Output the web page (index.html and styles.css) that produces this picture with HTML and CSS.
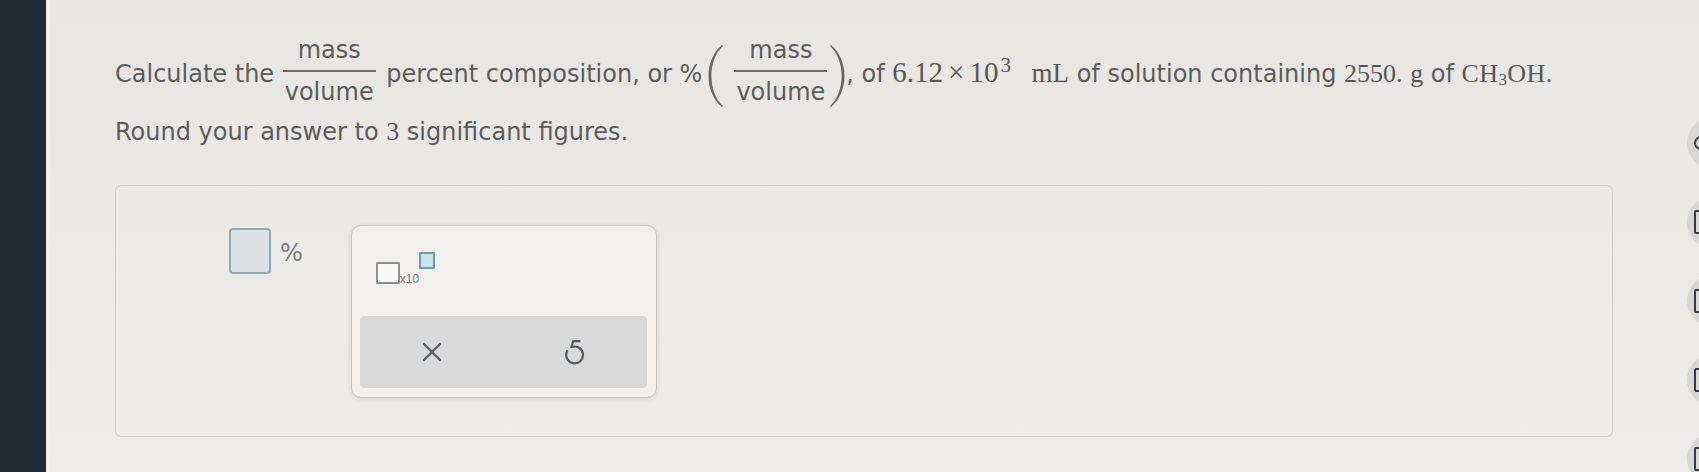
FILE: index.html
```html
<!DOCTYPE html>
<html lang="en">
<head>
<meta charset="utf-8">
<title>Mass/volume percent</title>
<link rel="stylesheet" href="styles.css">
</head>
<body>
<div class="screen">
  <div class="sidebar"></div>
  <div class="edge"></div>
  <main class="content">
    <p class="q1">Calculate the <span class="frac frac-a"><span class="num">mass</span><span class="bar"></span><span class="den">volume</span></span> percent composition, or %<svg class="paren paren-l" width="16" height="64" viewBox="0 0 16 64"><path d="M15,1 C-3,16 -3,48 15,63 L16,62 C0.5,48 0.5,16 16,2 Z"/></svg><span class="frac frac-b"><span class="num">mass</span><span class="bar"></span><span class="den">volume</span></span><svg class="paren" width="16" height="64" viewBox="0 0 16 64"><path transform="translate(16,0) scale(-1,1)" d="M15,1 C-3,16 -3,48 15,63 L16,62 C0.5,48 0.5,16 16,2 Z"/></svg>, of <span class="m big">6.12</span><span class="m big times">×</span><span class="m big">10</span><span class="m sup">3</span> <span class="m unit">mL</span> of solution containing <span class="m">2550.</span> <span class="m">g</span> of <span class="m chem">CH<span class="sub">3</span>OH.</span></p>
    <p class="q2">Round your answer to <span class="m">3</span> significant figures.</p>
    <section class="answer">
      <div class="input"></div>
      <span class="pct">%</span>
      <div class="popup">
        <div class="sci">
          <span class="base"></span>
          <span class="x10">x10</span>
          <span class="exp"></span>
        </div>
        <div class="actions">
          <button class="act" type="button" aria-label="Clear">
            <svg width="20" height="20" viewBox="0 0 20 20"><path d="M2 2 L18 18 M18 2 L2 18"/></svg>
          </button>
          <button class="act" type="button" aria-label="Undo">
            <svg width="22" height="27" viewBox="0 0 22 27"><path d="M15.5 3.2 L9.2 3.2 L7.4 9.2 M7.4 9.2 A8.4 8.4 0 1 1 3.2 13"/></svg>
          </button>
        </div>
      </div>
    </section>
  </main>
  <aside class="rail">
    <div class="circle"><span class="ico ico-round"></span></div>
    <div class="circle"><span class="ico ico-rect"></span></div>
    <div class="circle"><span class="ico ico-rect"></span></div>
    <div class="circle"><span class="ico ico-rect"></span></div>
    <div class="circle"><span class="ico ico-rect"></span></div>
  </aside>
</div>
</body>
</html>
```
FILE: styles.css
```css
html, body {
  margin: 0;
  padding: 0;
}

body {
  width: 1699px;
  height: 472px;
  overflow: hidden;
  background: linear-gradient(180deg, #e7e6e3 0%, #ebeae7 60%, #eeedeb 100%);
  font-family: "DejaVu Sans", Verdana, sans-serif;
  color: #5c5c5c;
}

.screen {
  display: flex;
  height: 472px;
}

.sidebar {
  width: 46px;
  flex: none;
  background: #1f2a33;
}

.edge {
  width: 4px;
  flex: none;
  background: #f2f2f0;
}

.content {
  flex: 1;
  min-width: 0;
  padding: 0 70px 0 65px;
}

.q1 {
  margin: 38px 0 0;
  font-size: 24px;
  line-height: 30px;
  white-space: nowrap;
}

.q2 {
  margin: 8.5px 0 0;
  font-size: 24px;
  line-height: 30px;
  white-space: nowrap;
}

.frac {
  display: inline-flex;
  flex-direction: column;
  align-items: center;
  vertical-align: 24px;
  line-height: 24px;
}

.frac-a {
  margin: 0 3px 0 1px;
}

.frac-b {
  margin: 0 3px 0 11px;
}

.num,
.den {
  display: block;
  padding: 0 2px;
}

.bar {
  align-self: stretch;
  height: 2px;
  margin: 8px 0;
  background: #6a6a6a;
}

.paren {
  vertical-align: -26px;
}

.paren-l {
  margin-left: 5px;
}

.paren path {
  fill: #666;
}

.m {
  font-family: "Liberation Serif", "Times New Roman", serif;
  font-size: 26px;
  line-height: 1;
  color: #575757;
}

.big {
  font-size: 29px;
}

.times {
  margin: 0 5px;
}

.sup {
  font-size: 21px;
  vertical-align: 10px;
  margin-left: 2px;
}

.unit {
  margin-left: 13px;
  font-size: 27px;
}

.chem {
  font-size: 26px;
  letter-spacing: 0.4px;
}

.sub {
  font-size: 17px;
  vertical-align: -3px;
}

.answer {
  margin-top: 38px;
  height: 252px;
  box-sizing: border-box;
  border: 1px solid #d2d0cb;
  border-radius: 6px;
  display: flex;
  align-items: flex-start;
  padding: 39px 0 0 113px;
}

.input {
  flex: none;
  width: 42px;
  height: 46px;
  margin-top: 3px;
  box-sizing: border-box;
  border: 2px solid #93a9b1;
  border-radius: 4px;
  background: #dce2e3;
}

.pct {
  margin: 13.7px 0 0 9px;
  font-size: 24px;
  line-height: 30px;
  color: #7a7a7a;
}

.popup {
  flex: none;
  margin-left: 48px;
  width: 306px;
  height: 173px;
  box-sizing: border-box;
  border: 1px solid #c6c6c5;
  border-radius: 10px;
  background: #f1f0ee;
  box-shadow: 0 1px 4px rgba(0, 0, 0, 0.10);
  display: flex;
  flex-direction: column;
}

.sci {
  height: 90px;
  box-sizing: border-box;
  padding: 26px 0 0 24px;
  display: flex;
  align-items: flex-start;
}

.base {
  flex: none;
  width: 24px;
  height: 22px;
  margin-top: 10px;
  box-sizing: border-box;
  border: 2px solid #8c9095;
  border-radius: 1px;
  background: #f7f7f6;
}

.x10 {
  margin-top: 21px;
  font-family: "Liberation Sans", Arial, sans-serif;
  font-size: 12px;
  line-height: 12px;
  color: #7a7a7a;
}

.exp {
  flex: none;
  width: 16px;
  height: 17px;
  box-sizing: border-box;
  border: 2px solid #5ea4ab;
  border-radius: 1px;
  background: #c7e5e9;
}

.actions {
  display: flex;
  height: 72px;
  margin: 0 9px 0 8px;
  border-radius: 4px;
  background: #d8d9d8;
}

.act {
  flex: 1;
  display: flex;
  align-items: center;
  justify-content: center;
  border: 0;
  padding: 0;
  background: none;
}

.act svg path {
  fill: none;
  stroke: #555a5e;
  stroke-width: 2.2;
  stroke-linecap: round;
  stroke-linejoin: round;
}

.rail {
  width: 16px;
  flex: none;
  overflow: hidden;
  display: flex;
  flex-direction: column;
  align-items: flex-start;
  gap: 27px;
  padding-top: 117px;
  box-sizing: border-box;
}

.circle {
  flex: none;
  width: 52px;
  height: 52px;
  margin-left: 4px;
  border-radius: 50%;
  background: #d7d7d6;
  display: flex;
  align-items: center;
}

.ico {
  display: block;
  margin-left: 7px;
  box-sizing: border-box;
}

.ico-round {
  width: 14px;
  height: 14px;
  border: 2px solid #3b4046;
  border-radius: 50%;
}

.ico-rect {
  width: 30px;
  height: 24px;
  border: 2px solid #363b41;
  border-radius: 2px;
}
```
